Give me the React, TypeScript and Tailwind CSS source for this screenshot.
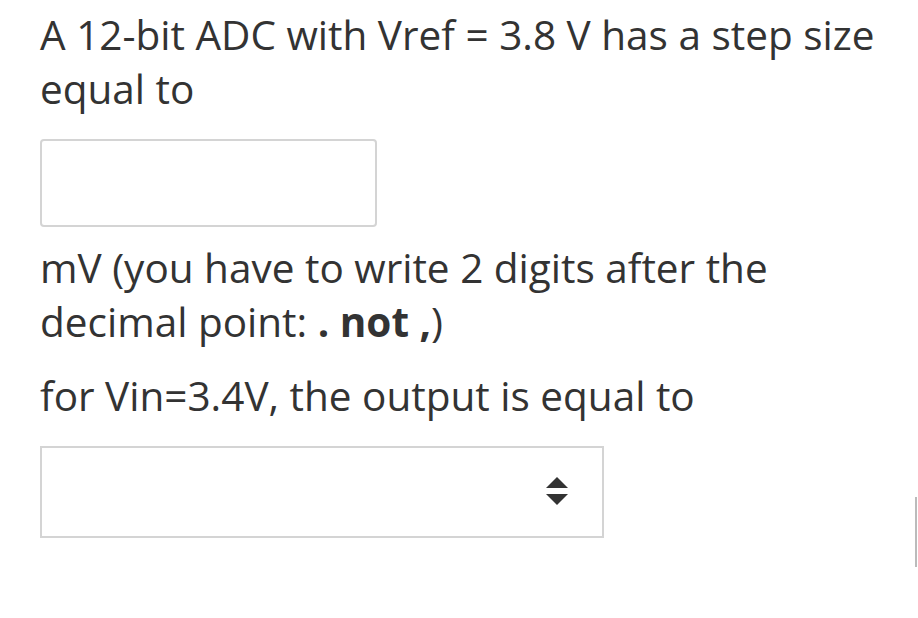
export default function App() {
  return (
    <div className="relative min-h-[618px] w-[918px] bg-white pl-10 pt-[8px] text-[#333] [font-family:'Open_Sans',sans-serif]">
      <p className="w-[870px] text-[40.5px] leading-[54px]">
        A 12-bit ADC with Vref = 3.8 V has a step size equal to
      </p>
      <div className="mt-[23px] h-[88px] w-[337px] rounded-[4px] border-2 border-[#d4d4d4] bg-white" />
      <p className="mt-[14px] w-[800px] text-[40.5px] leading-[54px]">
        mV (you have to write 2 digits after the decimal point: <b className="font-bold">. not ,</b>)
      </p>
      <p className="mt-[20px] text-[40.5px] leading-[54px]">for Vin=3.4V, the output is equal to</p>
      <div className="mt-[23px] flex h-[92px] w-[564px] items-center justify-end border-2 border-[#d4d4d4] bg-white pr-[34px]">
        <svg width="22" height="30" viewBox="0 0 22 30" fill="#333">
          <polygon points="11,0 22,11 0,11" />
          <polygon points="0,17 22,17 11,28" />
        </svg>
      </div>
      <div className="absolute left-[915px] top-[497px] h-[70px] w-[2px] bg-[#bbb]" />
    </div>
  );
}
